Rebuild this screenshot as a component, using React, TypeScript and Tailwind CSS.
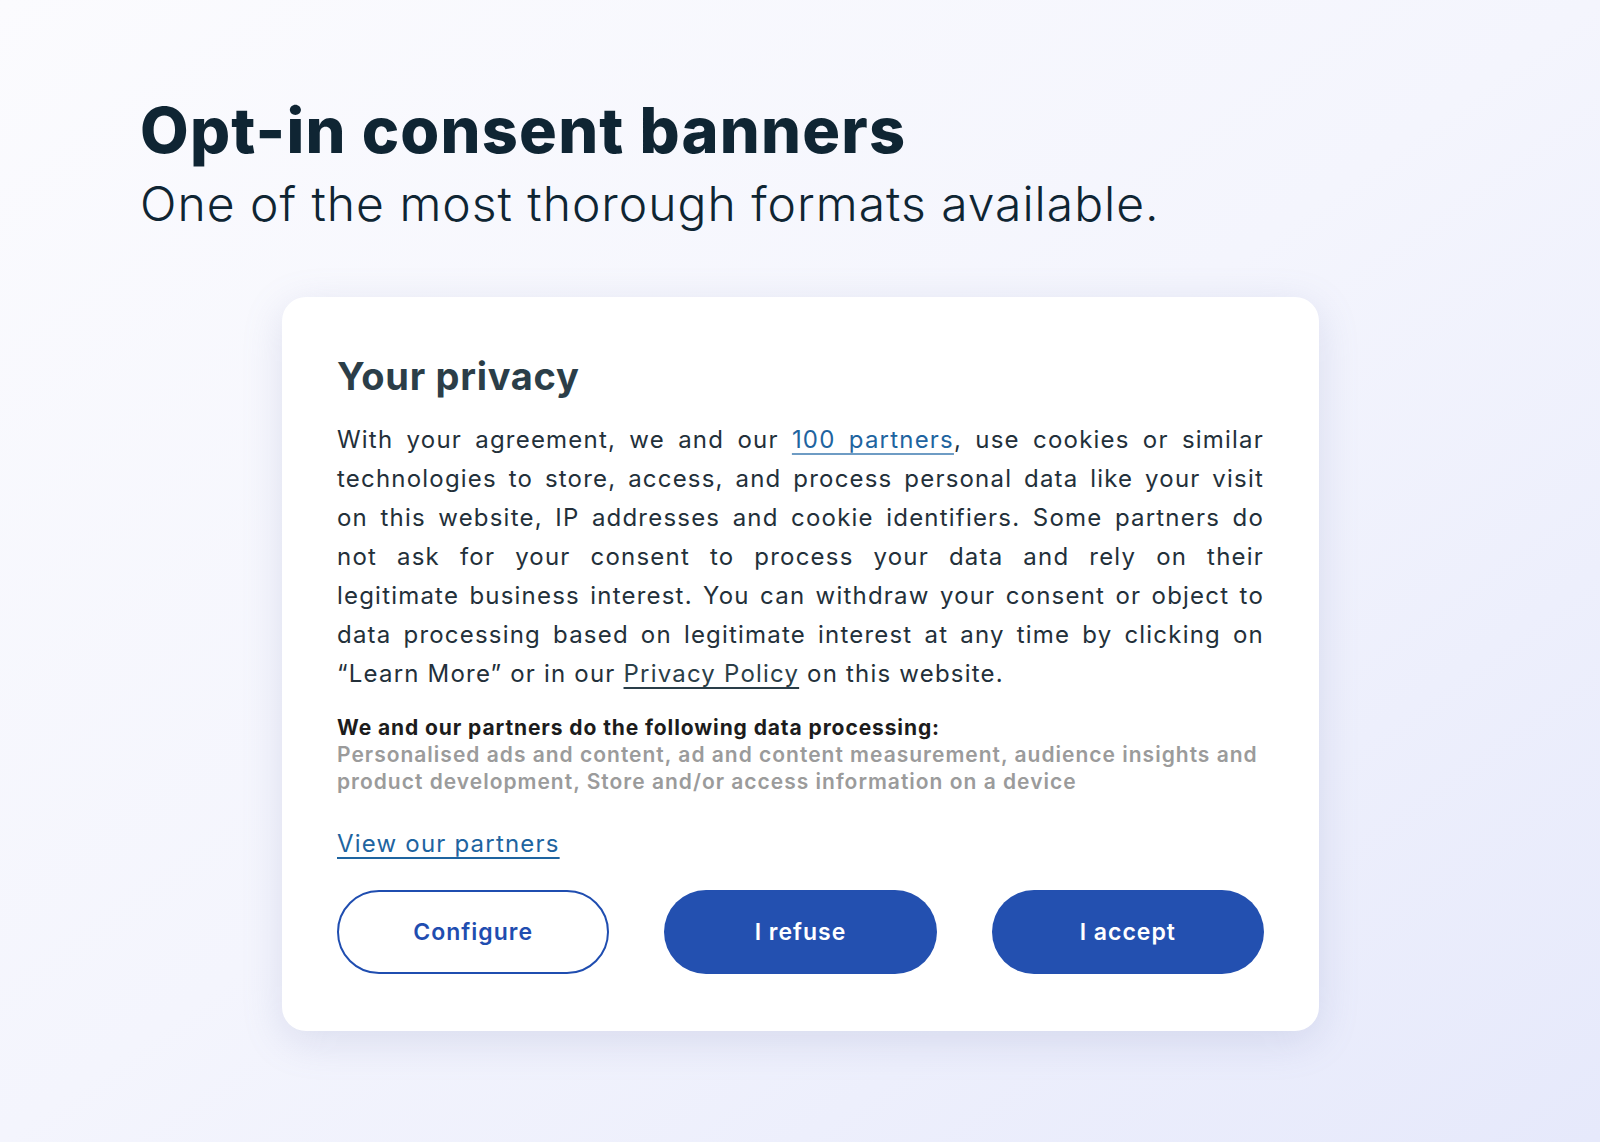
import React from "react";

const font = { fontFamily: "Inter, 'Open Sans', sans-serif" };

// one justified line of the privacy text
function Line({ children, last }: { children: React.ReactNode; last?: boolean }) {
  return (
    <span
      className={
        last
          ? "block whitespace-nowrap"
          : "block whitespace-nowrap text-justify [text-align-last:justify]"
      }
    >
      {children}
    </span>
  );
}

export default function App() {
  return (
    <div
      className="min-h-[1142px] w-full bg-gradient-to-br from-[#fbfbfe] via-[#f4f5fd] to-[#e6e9fb] px-[140px] pt-[99px]"
      style={font}
    >
      {/* Page heading */}
      <h1 className="text-[63px] font-extrabold leading-none tracking-[1.2px] text-[#0f2533]">
        Opt-in consent banners
      </h1>
      <p className="mt-[18px] text-[48px] font-light leading-none tracking-[1px] text-[#0f2533]">
        One of the most thorough formats available.
      </p>

      {/* Banner card */}
      <div className="ml-[142px] mt-[69px] w-[1037px] rounded-[24px] bg-white px-[55px] pt-[60px] pb-[57px] shadow-[0_10px_40px_rgba(120,130,180,0.2)]">
        <h2 className="text-[38px] font-bold leading-none tracking-[0.7px] text-[#2b3e48]">
          Your privacy
        </h2>

        <p className="mt-[25px] text-[24px] font-normal leading-[39px] tracking-[1.2px] text-[#23303a]">
          <Line>
            With your agreement, we and our{" "}
            <a className="text-[#1e64a0] underline decoration-[#6e9cc4] underline-offset-[5px]" href="#">
              100 partners
            </a>
            , use cookies or similar
          </Line>
          <Line>technologies to store, access, and process personal data like your visit</Line>
          <Line>on this website, IP addresses and cookie identifiers. Some partners do</Line>
          <Line>not ask for your consent to process your data and rely on their</Line>
          <Line>legitimate business interest. You can withdraw your consent or object to</Line>
          <Line>data processing based on legitimate interest at any time by clicking on</Line>
          <Line last>
            “Learn More” or in our{" "}
            <a className="text-[#2a3e48] underline underline-offset-[5px]" href="#">
              Privacy Policy
            </a>{" "}
            on this website.
          </Line>
        </p>

        {/* Data processing summary */}
        <div className="mt-[21px] text-[21px] leading-[27px]">
          <p className="font-bold tracking-[0.9px] text-[#1c1c1c]">
            We and our partners do the following data processing:
          </p>
          <p className="font-semibold tracking-[1px] text-[#9b9b9b]">
            Personalised ads and content, ad and content measurement, audience insights and
            <br />
            product development, Store and/or access information on a device
          </p>
        </div>

        <a
          className="mt-[37px] inline-block text-[24px] leading-none tracking-[1.2px] text-[#1e64a0] underline decoration-[#1e64a0] underline-offset-[5px]"
          href="#"
        >
          View our partners
        </a>

        {/* Actions */}
        <div className="mt-[32px] grid grid-cols-3 gap-[55px]">
          <button className="h-[84px] rounded-full border-2 border-[#1f4db0] bg-white text-[23px] font-semibold tracking-[1px] text-[#1f4db0]">
            Configure
          </button>
          <button className="h-[84px] rounded-full bg-[#2350b0] text-[23px] font-semibold tracking-[1px] text-white">
            I refuse
          </button>
          <button className="h-[84px] rounded-full bg-[#2350b0] text-[23px] font-semibold tracking-[1px] text-white">
            I accept
          </button>
        </div>
      </div>
    </div>
  );
}
